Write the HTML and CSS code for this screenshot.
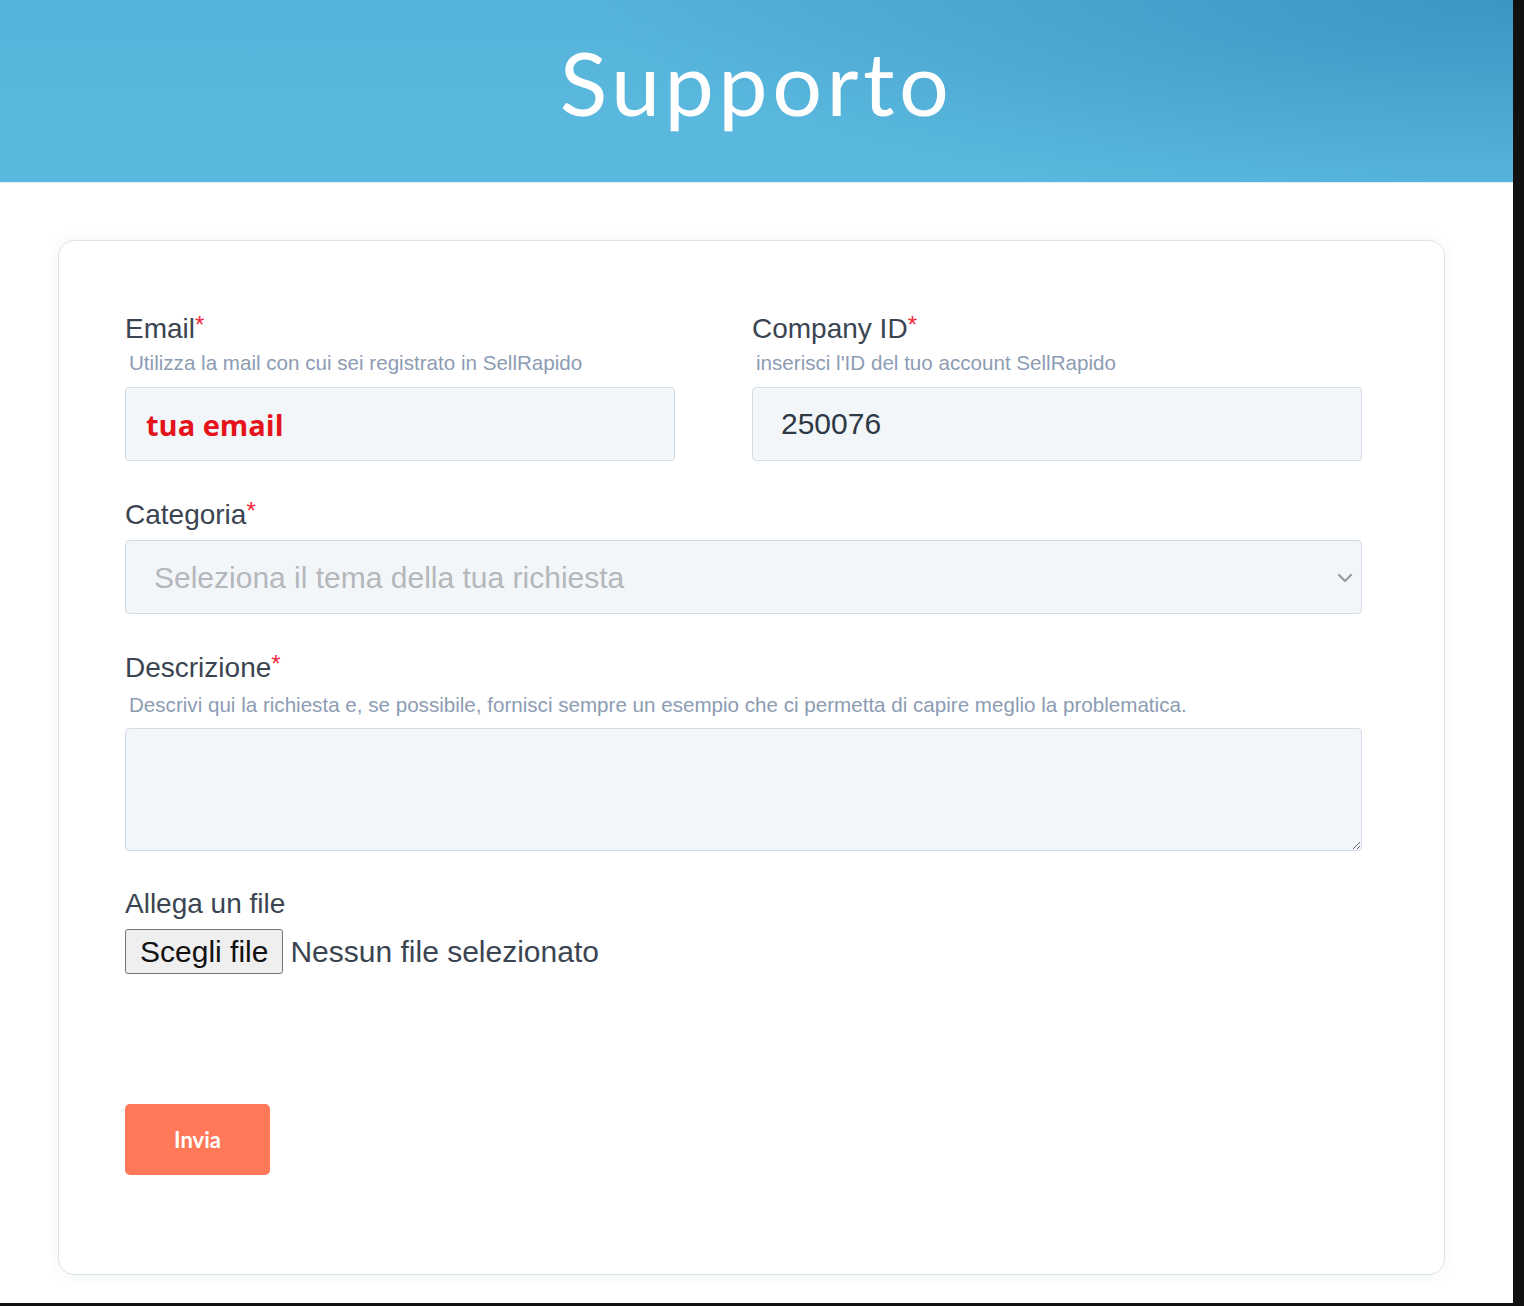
FILE: index.html
```html
<!DOCTYPE html>
<html lang="it">
<head>
    <meta charset="UTF-8">
    <meta name="viewport" content="width=device-width, initial-scale=1.0">
    <title>Supporto</title>
    <link rel="stylesheet" href="styles.css">
</head>
<body>

<div class="page">

    <header class="hero">
        <h1>Supporto</h1>
    </header>

    <form class="card" onsubmit="return false">

        <div class="row">
            <div class="field">
                <label class="label" for="email">Email<span class="req">*</span></label>
                <p class="hint">Utilizza la mail con cui sei registrato in SellRapido</p>
                <input class="control email" id="email" type="text" value="tua email">
            </div>
            <div class="field">
                <label class="label" for="company">Company ID<span class="req">*</span></label>
                <p class="hint">inserisci l'ID del tuo account SellRapido</p>
                <input class="control" id="company" type="text" value="250076">
            </div>
        </div>

        <div class="field">
            <label class="label" for="categoria">Categoria<span class="req">*</span></label>
            <div class="select-wrap">
                <select class="control select" id="categoria">
                    <option value="" selected disabled>Seleziona il tema della tua richiesta</option>
                    <option>Ordini</option>
                    <option>Marketplace</option>
                    <option>Fatturazione</option>
                </select>
                <!-- chevron of the select -->
                <svg class="chevron" width="16" height="10" viewBox="0 0 16 10">
                    <path d="M2 2 L8 8 L14 2" fill="none" stroke="#9a9a9a" stroke-width="2.2" stroke-linecap="round" stroke-linejoin="round"/>
                </svg>
            </div>
        </div>

        <div class="field desc">
            <label class="label" for="descrizione">Descrizione<span class="req">*</span></label>
            <p class="hint">Descrivi qui la richiesta e, se possibile, fornisci sempre un esempio che ci permetta di capire meglio la problematica.</p>
            <textarea class="control area" id="descrizione"></textarea>
        </div>

        <div class="field attach">
            <span class="label">Allega un file</span>
            <div class="file-row">
                <label class="file-btn">Scegli file<input type="file" hidden></label>
                <span class="file-name">Nessun file selezionato</span>
            </div>
        </div>

        <button class="send" type="submit">Invia</button>

    </form>

</div>

</body>
</html>
```

FILE: styles.css
```css
body {
    margin: 0;
    background-color: #111111;
    font-family: "Liberation Sans", Arial, sans-serif;
    overflow: hidden;
}

.page {
    width: 1513px;
    height: 1303px;
    background-color: #ffffff;
    overflow: hidden;
}

/* top banner */
.hero {
    height: 183px;
    display: flex;
    align-items: center;
    justify-content: center;
    background:
        radial-gradient(ellipse 60% 120% at 100% 0%, rgba(58, 146, 194, 0.9) 0%, rgba(90, 185, 222, 0) 100%),
        linear-gradient(to bottom, #55b2da 0%, #5ab8de 60%, #5bb9df 100%);
    border-bottom: 1px solid #e3f0f7;
    box-sizing: border-box;
}

.hero h1 {
    margin: 0;
    color: #ffffff;
    font-family: Lato, "Open Sans", sans-serif;
    font-weight: 400;
    font-size: 88px;
    letter-spacing: 4.5px;
    line-height: 1;
    padding-bottom: 19px;
}

/* form card */
.card {
    margin: 57px 0 0 58px;
    width: 1387px;
    height: 1035px;
    box-sizing: border-box;
    padding: 71px 82px 0 66px;
    border: 1px solid #dbe3ea;
    border-radius: 16px;
    box-shadow: 0 0 14px rgba(30, 60, 90, 0.06);
    display: flex;
    flex-direction: column;
}

.row {
    display: grid;
    grid-template-columns: 550fr 610fr;
    column-gap: 77px;
}

.field {
    display: flex;
    flex-direction: column;
    margin-bottom: 37px;
}

.label {
    font-size: 28px;
    line-height: 34px;
    color: #3b4552;
    margin-bottom: 8px;
}

.req {
    color: #f0283c;
    font-size: 24px;
    vertical-align: top;
    line-height: 26px;
}

.hint {
    margin: -3px 0 12px 4px;
    font-size: 20.6px;
    line-height: 24px;
    color: #8c9cb3;
}

.desc {
    margin-bottom: 36px;
}

.desc .hint {
    margin-top: 0;
    margin-bottom: 11px;
}

.control {
    box-sizing: border-box;
    width: 100%;
    height: 74px;
    padding: 0 28px;
    background-color: #f3f6f9;
    border: 1px solid #d3dce6;
    border-radius: 4px;
    font-family: "Liberation Sans", Arial, sans-serif;
    font-size: 30px;
    color: #2f3845;
    outline: none;
}

.email {
    padding-left: 20px;
    font-family: "Open Sans", sans-serif;
    font-weight: 700;
    font-size: 29px;
    color: #e5141c;
}

.select-wrap {
    position: relative;
}

.select {
    appearance: none;
    -webkit-appearance: none;
    color: #b4b7bb;
}

.chevron {
    position: absolute;
    right: 9px;
    top: 33px;
    pointer-events: none;
}

.area {
    height: 123px;
    padding: 14px 28px;
    resize: vertical;
}

.attach {
    margin-bottom: 130px;
}

.file-row {
    display: flex;
    align-items: center;
}

.file-btn {
    box-sizing: border-box;
    height: 45px;
    display: inline-flex;
    align-items: center;
    padding: 0 14px;
    background-color: #efefef;
    border: 1px solid #767676;
    border-radius: 3px;
    font-size: 30px;
    color: #111111;
    cursor: pointer;
}

.file-name {
    margin-left: 7px;
    font-size: 30px;
    color: #3b4552;
}

.send {
    width: 145px;
    height: 71px;
    border: none;
    border-radius: 5px;
    background-color: #ff7858;
    color: #ffffff;
    font-family: Lato, "Open Sans", sans-serif;
    font-weight: 700;
    font-size: 22px;
    cursor: pointer;
}
```
